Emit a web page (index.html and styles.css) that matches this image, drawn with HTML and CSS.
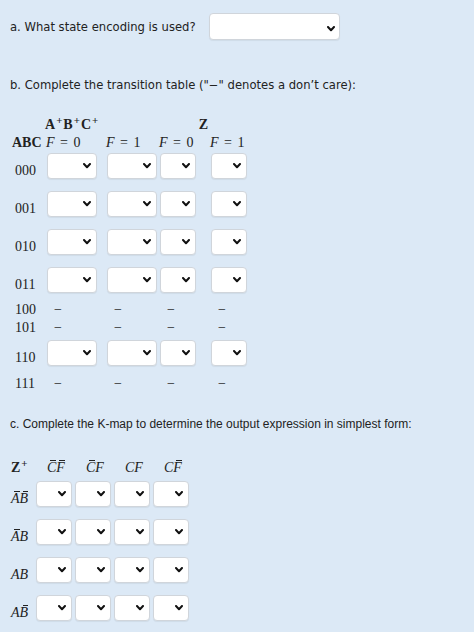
FILE: index.html
```html
<!DOCTYPE html>
<html lang="en">
<head>
<meta charset="utf-8">
<title>State machine questions</title>
<link rel="stylesheet" href="styles.css">
</head>
<body>
<div class="page">
  <div class="qa">
    <span class="qtext">a. What state encoding is used?</span>
    <div class="sel big"><svg class="chev" viewBox="0 0 8 6"><polyline points="1,1 4,4.2 7,1"/></svg></div>
  </div>

  <p class="qtext qb">b. Complete the transition table ("−" denotes a don’t care):</p>

  <div class="tt">
    <div class="tr hdr">
      <span class="c1 bold">A<sup>+</sup>B<sup>+</sup>C<sup>+</sup></span>
      <span class="zc bold">Z</span>
    </div>
    <div class="tr hdr">
      <span class="bold">ABC</span>
      <span class="feq"><i>F</i> = 0</span>
      <span class="feq"><i>F</i> = 1</span>
      <span class="feq"><i>F</i> = 0</span>
      <span class="feq"><i>F</i> = 1</span>
    </div>
    <div class="tr srow first">
      <span class="rl">000</span>
      <div class="sel w50"><svg class="chev" viewBox="0 0 8 6"><polyline points="1,1 4,4.2 7,1"/></svg></div>
      <div class="sel w50"><svg class="chev" viewBox="0 0 8 6"><polyline points="1,1 4,4.2 7,1"/></svg></div>
      <div class="sel w36"><svg class="chev" viewBox="0 0 8 6"><polyline points="1,1 4,4.2 7,1"/></svg></div>
      <div class="sel w36"><svg class="chev" viewBox="0 0 8 6"><polyline points="1,1 4,4.2 7,1"/></svg></div>
    </div>
    <div class="tr srow">
      <span class="rl">001</span>
      <div class="sel w50"><svg class="chev" viewBox="0 0 8 6"><polyline points="1,1 4,4.2 7,1"/></svg></div>
      <div class="sel w50"><svg class="chev" viewBox="0 0 8 6"><polyline points="1,1 4,4.2 7,1"/></svg></div>
      <div class="sel w36"><svg class="chev" viewBox="0 0 8 6"><polyline points="1,1 4,4.2 7,1"/></svg></div>
      <div class="sel w36"><svg class="chev" viewBox="0 0 8 6"><polyline points="1,1 4,4.2 7,1"/></svg></div>
    </div>
    <div class="tr srow">
      <span class="rl">010</span>
      <div class="sel w50"><svg class="chev" viewBox="0 0 8 6"><polyline points="1,1 4,4.2 7,1"/></svg></div>
      <div class="sel w50"><svg class="chev" viewBox="0 0 8 6"><polyline points="1,1 4,4.2 7,1"/></svg></div>
      <div class="sel w36"><svg class="chev" viewBox="0 0 8 6"><polyline points="1,1 4,4.2 7,1"/></svg></div>
      <div class="sel w36"><svg class="chev" viewBox="0 0 8 6"><polyline points="1,1 4,4.2 7,1"/></svg></div>
    </div>
    <div class="tr srow">
      <span class="rl">011</span>
      <div class="sel w50"><svg class="chev" viewBox="0 0 8 6"><polyline points="1,1 4,4.2 7,1"/></svg></div>
      <div class="sel w50"><svg class="chev" viewBox="0 0 8 6"><polyline points="1,1 4,4.2 7,1"/></svg></div>
      <div class="sel w36"><svg class="chev" viewBox="0 0 8 6"><polyline points="1,1 4,4.2 7,1"/></svg></div>
      <div class="sel w36"><svg class="chev" viewBox="0 0 8 6"><polyline points="1,1 4,4.2 7,1"/></svg></div>
    </div>
    <div class="tr drow d100">
      <span class="rl">100</span>
      <span class="dash">−</span><span class="dash">−</span><span class="dash">−</span><span class="dash">−</span>
    </div>
    <div class="tr drow">
      <span class="rl">101</span>
      <span class="dash">−</span><span class="dash">−</span><span class="dash">−</span><span class="dash">−</span>
    </div>
    <div class="tr srow s110">
      <span class="rl">110</span>
      <div class="sel w50"><svg class="chev" viewBox="0 0 8 6"><polyline points="1,1 4,4.2 7,1"/></svg></div>
      <div class="sel w50"><svg class="chev" viewBox="0 0 8 6"><polyline points="1,1 4,4.2 7,1"/></svg></div>
      <div class="sel w36"><svg class="chev" viewBox="0 0 8 6"><polyline points="1,1 4,4.2 7,1"/></svg></div>
      <div class="sel w36"><svg class="chev" viewBox="0 0 8 6"><polyline points="1,1 4,4.2 7,1"/></svg></div>
    </div>
    <div class="tr drow d111">
      <span class="rl">111</span>
      <span class="dash">−</span><span class="dash">−</span><span class="dash">−</span><span class="dash">−</span>
    </div>
  </div>

  <p class="qc">c. Complete the K-map to determine the output expression in simplest form:</p>

  <div class="km">
    <div class="kr khdr">
      <span class="bold">Z<sup>+</sup></span>
      <span class="kh"><i><span class="bar">C</span><span class="bar">F</span></i></span>
      <span class="kh"><i><span class="bar">C</span>F</i></span>
      <span class="kh"><i>CF</i></span>
      <span class="kh"><i>C<span class="bar">F</span></i></span>
    </div>
    <div class="kr ksel first">
      <span class="kl"><i><span class="bar">A</span><span class="bar">B</span></i></span>
      <div class="sel w36"><svg class="chev" viewBox="0 0 8 6"><polyline points="1,1 4,4.2 7,1"/></svg></div>
      <div class="sel w36"><svg class="chev" viewBox="0 0 8 6"><polyline points="1,1 4,4.2 7,1"/></svg></div>
      <div class="sel w36"><svg class="chev" viewBox="0 0 8 6"><polyline points="1,1 4,4.2 7,1"/></svg></div>
      <div class="sel w36"><svg class="chev" viewBox="0 0 8 6"><polyline points="1,1 4,4.2 7,1"/></svg></div>
    </div>
    <div class="kr ksel">
      <span class="kl"><i><span class="bar">A</span>B</i></span>
      <div class="sel w36"><svg class="chev" viewBox="0 0 8 6"><polyline points="1,1 4,4.2 7,1"/></svg></div>
      <div class="sel w36"><svg class="chev" viewBox="0 0 8 6"><polyline points="1,1 4,4.2 7,1"/></svg></div>
      <div class="sel w36"><svg class="chev" viewBox="0 0 8 6"><polyline points="1,1 4,4.2 7,1"/></svg></div>
      <div class="sel w36"><svg class="chev" viewBox="0 0 8 6"><polyline points="1,1 4,4.2 7,1"/></svg></div>
    </div>
    <div class="kr ksel">
      <span class="kl"><i>AB</i></span>
      <div class="sel w36"><svg class="chev" viewBox="0 0 8 6"><polyline points="1,1 4,4.2 7,1"/></svg></div>
      <div class="sel w36"><svg class="chev" viewBox="0 0 8 6"><polyline points="1,1 4,4.2 7,1"/></svg></div>
      <div class="sel w36"><svg class="chev" viewBox="0 0 8 6"><polyline points="1,1 4,4.2 7,1"/></svg></div>
      <div class="sel w36"><svg class="chev" viewBox="0 0 8 6"><polyline points="1,1 4,4.2 7,1"/></svg></div>
    </div>
    <div class="kr ksel">
      <span class="kl"><i>A<span class="bar">B</span></i></span>
      <div class="sel w36"><svg class="chev" viewBox="0 0 8 6"><polyline points="1,1 4,4.2 7,1"/></svg></div>
      <div class="sel w36"><svg class="chev" viewBox="0 0 8 6"><polyline points="1,1 4,4.2 7,1"/></svg></div>
      <div class="sel w36"><svg class="chev" viewBox="0 0 8 6"><polyline points="1,1 4,4.2 7,1"/></svg></div>
      <div class="sel w36"><svg class="chev" viewBox="0 0 8 6"><polyline points="1,1 4,4.2 7,1"/></svg></div>
    </div>
  </div>
</div>
</body>
</html>
```
FILE: styles.css
```css
html, body {
  margin: 0;
  background: #dce9f6;
}
body {
  color: #222222;
  font-family: "DejaVu Sans", Verdana, sans-serif;
  font-size: 11.6px;
}
.page {
  padding: 13px 0 0 10px;
  height: 619px;
  overflow: hidden;
}

/* select boxes */
.sel {
  box-sizing: border-box;
  height: 26px;
  background: #ffffff;
  border: 1px solid #d0d5db;
  border-radius: 4px;
  box-shadow: 0 1px 1px rgba(0, 0, 0, 0.06);
  display: flex;
  align-items: center;
  justify-content: flex-end;
  padding-right: 5px;
}
.sel.big {
  width: 131px;
  height: 27px;
  padding-right: 4px;
  padding-top: 5px;
}
.w50 { width: 50px; }
.w36 { width: 36px; }
.chev {
  width: 8px;
  height: 6px;
  fill: none;
  stroke: #111;
  stroke-width: 2;
  stroke-linecap: round;
  stroke-linejoin: round;
}

/* part a / b */
.qa {
  display: flex;
  align-items: center;
  gap: 13px;
  height: 27px;
}
.qtext { line-height: 18px; }
.qb {
  margin: 36px 0 0;
}

/* transition table */
.tt, .km {
  font-family: "Liberation Serif", "Times New Roman", serif;
  font-size: 14px;
}
.tt {
  margin: 22px 0 0 2px;
}
.tr {
  display: grid;
  grid-template-columns: 35px 60px 53px 51px 36px;
}
.hdr {
  height: 18px;
  line-height: 18px;
}
.bold { font-weight: bold; }
sup {
  font-size: 0.78em;
  line-height: 0;
  vertical-align: 0.42em;
  margin: 0 1px 0 1px;
}
.c1 {
  grid-column: 2 / span 2;
  margin-left: -2px;
}
.zc {
  grid-column: 4 / span 2;
  text-align: center;
}
.feq {
  word-spacing: 2px;
  margin-left: -1px;
}
.srow {
  height: 26px;
  margin-top: 12px;
}
.srow.first { margin-top: 1px; }
.srow.s110 { margin-top: 3px; }
.rl {
  align-self: end;
  line-height: 14px;
  padding: 0 0 1px 3px;
}
.drow {
  height: 18px;
  line-height: 18px;
}
.drow .rl {
  align-self: auto;
  line-height: 18px;
  padding: 0 0 0 3px;
}
.d100 { margin-top: 8px; }
.d111 { margin-top: 9px; }
.dash {
  padding-left: 7px;
}

/* part c */
.qc {
  margin: 22px 0 0;
  font-family: "Liberation Sans", Arial, sans-serif;
  font-size: 12px;
  line-height: 18px;
}

/* k-map */
.km {
  margin: 26px 0 0 1px;
}
.kr {
  display: grid;
  grid-template-columns: 22px 36px 36px 36px 36px;
  column-gap: 3px;
}
.khdr {
  height: 18px;
  line-height: 18px;
}
.kh {
  padding-left: 11px;
}
.ksel {
  height: 26px;
  margin-top: 12px;
}
.ksel.first { margin-top: 4px; }
.kl {
  align-self: end;
  line-height: 14px;
  padding-bottom: 1px;
}
.bar {
  position: relative;
}
.bar::before {
  content: "";
  position: absolute;
  left: 3px;
  right: 0;
  top: 0;
  border-top: 1px solid currentColor;
}
```
